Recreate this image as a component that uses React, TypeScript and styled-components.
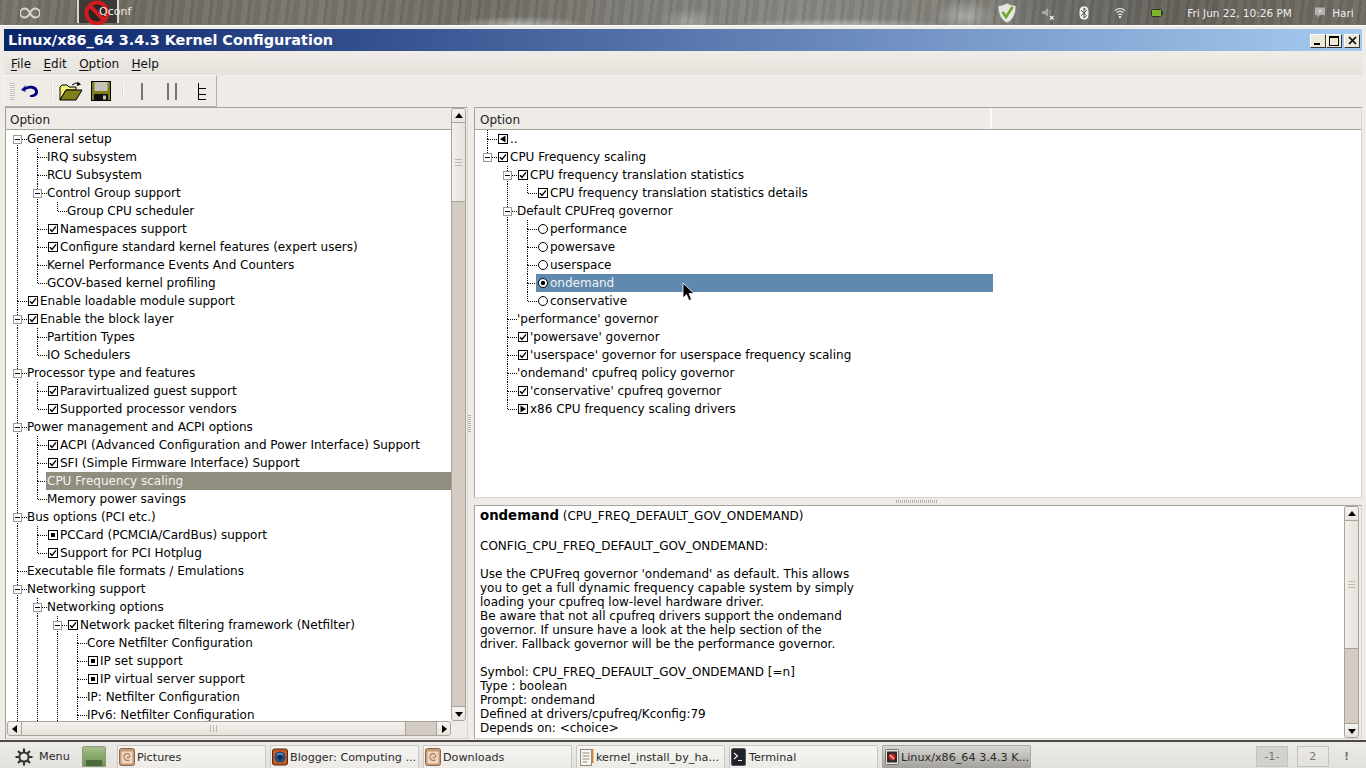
import React from 'react';
import styled, { createGlobalStyle } from 'styled-components';

const GlobalStyle = createGlobalStyle`
  html, body {
    margin: 0;
    padding: 0;
    background: #efebe6;
    overflow: hidden;
  }
  * {
    box-sizing: border-box;
  }
`;

const Desktop = styled.div`
  position: relative;
  width: 1366px;
  height: 768px;
  display: flex;
  flex-direction: column;
  overflow: hidden;
  font-family: 'DejaVu Sans', sans-serif;
  font-size: 12px;
  color: #000;
`;

/* ---------- top panel ---------- */

const TopPanel = styled.div`
  height: 25px;
  flex: none;
  display: flex;
  align-items: center;
  color: #f0eeea;
  font-size: 10.5px;
  background:
    repeating-linear-gradient(97deg, #00000010 0 3px, #ffffff08 3px 7px, #00000008 7px 13px, #ffffff0c 13px 19px),
    radial-gradient(ellipse 70px 9px at 520px 25px, #aeb0ac 0, #aeb0ac00 100%),
    radial-gradient(ellipse 110px 8px at 840px 26px, #b4b6b2 0, #b4b6b200 100%),
    radial-gradient(ellipse 30px 14px at 690px 22px, #a0a19d 0, #a0a19d00 100%),
    radial-gradient(ellipse 30px 16px at 965px 16px, #a9aba7 0, #a9aba700 100%),
    linear-gradient(90deg, #77736a 0, #6f6a60 120px, #79746a 300px, #706c63 480px, #7d7b75 620px, #86857f 800px, #7f7d76 1000px, #6c6d68 1040px, #64615a 1180px, #6f6b64 1366px);
`;

const PanelLogo = styled.div`
  width: 77px;
  flex: none;
  display: flex;
  justify-content: center;
  padding-right: 18px;
`;

const ActiveApp = styled.div`
  width: 42px;
  height: 23px;
  flex: none;
  display: flex;
  align-items: center;
  gap: 1px;
  padding-left: 9px;
  background: #3b3a38;
  border-left: 2px solid #d8d6d2;
  border-right: 2px solid #d8d6d2;
  overflow: visible;
  white-space: nowrap;
  align-self: flex-start;
`;

const AppLabel = styled.span`
  margin-left: -12px;
  color: #eeeeea;
  font-size: 11px;
`;

const PanelSpacer = styled.div`
  flex: 1;
`;

const Tray = styled.div`
  display: flex;
  align-items: center;
  padding-right: 12px;
`;

const TraySlot = styled.div<{ $w: number; $ml: number }>`
  width: ${(p) => p.$w}px;
  margin-left: ${(p) => p.$ml}px;
  flex: none;
  display: flex;
  justify-content: center;
  align-items: center;
  white-space: nowrap;
`;

/* ---------- window ---------- */

const Window = styled.div`
  height: 715px;
  flex: none;
  display: flex;
  flex-direction: column;
  padding: 4px 4px 0 4px;
  background: #efebe6;
  border-top: 1px solid #fff;
`;

const TitleBar = styled.div`
  height: 22px;
  flex: none;
  margin-top: -1px;
  padding: 0 2px 0 4px;
  display: flex;
  align-items: center;
  justify-content: space-between;
  font-size: 14.4px;
  font-weight: bold;
  color: #fff;
  background: linear-gradient(90deg, #0a246a, #a6caf0);
`;

const WinButtons = styled.div`
  display: flex;
  padding-top: 1px;
`;

const WinButton = styled.div<{ $gap?: number }>`
  width: 16px;
  height: 14px;
  margin-left: ${(p) => p.$gap ?? 0}px;
  display: flex;
  align-items: center;
  justify-content: center;
  background: #ece9d8;
  border-top: 1px solid #fff;
  border-left: 1px solid #fff;
  border-right: 1px solid #333;
  border-bottom: 1px solid #333;
`;

const MenuBar = styled.div`
  height: 24px;
  flex: none;
  display: flex;
  align-items: center;
  gap: 12.4px;
  padding: 2px 0 0 7px;
  background: linear-gradient(#f0ece7, #e5e2dc);
`;

const MenuItem = styled.span`
  color: #111;
  u {
    text-underline-offset: 2px;
  }
`;

const ToolRow = styled.div`
  height: 32px;
  flex: none;
  display: flex;
`;

const Toolbar = styled.div`
  width: 213px;
  height: 32px;
  display: flex;
  align-items: center;
  padding-left: 5px;
  border: 1px solid #b5b1a9;
  border-left-color: #f8f6f3;
  border-top-color: #f8f6f3;
  background: #efebe6;
`;

const Grip = styled.div`
  width: 5px;
  height: 17px;
  flex: none;
  background: repeating-linear-gradient(to bottom, #c4c0b8 0 1px, #f7f5f2 1px 2px);
`;

const ToolButton = styled.div<{ $w?: number }>`
  width: ${(p) => p.$w ?? 30}px;
  height: 30px;
  flex: none;
  display: flex;
  align-items: center;
  justify-content: center;
`;

const ToolSep = styled.div<{ $gap: number }>`
  width: 2px;
  height: 16px;
  flex: none;
  margin: 0 ${(p) => p.$gap}px 0 6px;
  background: #dedad4;
  border-right: 1px solid #fbfaf8;
`;

const Panes = styled.div`
  flex: 1;
  min-height: 0;
  display: flex;
  padding: 0 0 1px 1px;
`;

const LeftFrame = styled.div`
  width: 463px;
  flex: none;
  display: grid;
  grid-template-columns: 1fr 15px;
  grid-template-rows: 1fr 15px;
  padding-bottom: 2px;
  padding-right: 1px;
  border: 1px solid #a8a49c;
  border-bottom-color: #d9d5cf;
  border-right-color: #d9d5cf;
  background: #efebe6;
  overflow: hidden;
`;

const LeftMain = styled.div`
  min-height: 0;
  display: flex;
  flex-direction: column;
  background: #fff;
  overflow: hidden;
`;

const VSplit = styled.div`
  width: 6px;
  flex: none;
  display: flex;
  align-items: center;
  justify-content: center;
`;

const SplitDotsV = styled.div`
  width: 3px;
  height: 17px;
  margin-left: -4px;
  background: repeating-linear-gradient(to bottom, #b0aca4 0 1px, #f7f5f2 1px 2px);
`;

const RightColumn = styled.div`
  flex: 1;
  min-width: 0;
  display: flex;
  flex-direction: column;
`;

const TreeFrame = styled.div`
  height: 391px;
  flex: none;
  display: flex;
  flex-direction: column;
  border: 1px solid #a8a49c;
  border-bottom-color: #d9d5cf;
  border-right-color: #d9d5cf;
  background: #fff;
  overflow: hidden;
`;

const HSplit = styled.div`
  height: 7px;
  flex: none;
  display: flex;
  align-items: center;
  justify-content: center;
  padding-right: 4px;
`;

const SplitDotsH = styled.div`
  width: 41px;
  height: 3px;
  background: repeating-linear-gradient(to right, #b0aca4 0 1px, #f7f5f2 1px 2px);
`;

const DetailFrame = styled.div`
  flex: 1;
  min-height: 0;
  display: flex;
  padding-right: 2px;
  border: 1px solid #a8a49c;
  border-bottom-color: #d9d5cf;
  border-right-color: #d9d5cf;
  background: #efebe6;
  overflow: hidden;
`;

const DetailBody = styled.div`
  flex: 1;
  min-width: 0;
  padding: 2px 0 0 5px;
  background: #fff;
  line-height: 14px;
  white-space: pre-line;
  overflow: hidden;
`;

const DetailTitle = styled.div`
  height: 16px;
  line-height: 16px;
  margin-bottom: 15px;
  strong {
    font-size: 13.3px;
  }
`;

/* ---------- list view ---------- */

const Header = styled.div`
  height: 22px;
  flex: none;
  display: flex;
  background: #efebe6;
  border-bottom: 1px solid #a8a49c;
`;

const HeaderCell = styled.div<{ $w?: number; $x?: number }>`
  width: ${(p) => (p.$w ? `${p.$w}px` : 'auto')};
  flex: ${(p) => (p.$w ? 'none' : 1)};
  padding: 5px 0 0 ${(p) => p.$x ?? 5}px;
  color: #222;
  border-right: ${(p) => (p.$w ? '2px solid #fbfaf8' : 'none')};
`;

const Tree = styled.div<{ $w: number; $x: number }>`
  width: ${(p) => p.$w}px;
  padding-left: ${(p) => p.$x}px;
`;

const Row = styled.div`
  height: 18px;
  display: flex;
  line-height: 18px;
  white-space: nowrap;
`;

const dots = (dir: string) => `repeating-linear-gradient(${dir}, #000 0 1px, transparent 1px 2px)`;

const Guide = styled.div<{ $on: boolean }>`
  width: 20px;
  height: 18px;
  flex: none;
  background: ${(p) => (p.$on ? `${dots('to bottom')} 10px 0 / 1px 100% no-repeat` : 'none')};
`;

const Connector = styled.div<{ $top: boolean; $down: boolean }>`
  width: 20px;
  height: 18px;
  flex: none;
  display: flex;
  align-items: center;
  padding-left: 6px;
  background:
    ${(p) => (p.$top ? `${dots('to bottom')} 10px 0 / 1px 9px no-repeat,` : '')}
    ${(p) => (p.$down ? `${dots('to bottom')} 10px 9px / 1px 9px no-repeat,` : '')}
    ${dots('to right')} 11px 9px / 9px 1px no-repeat;
`;

const Expander = styled.div`
  width: 9px;
  height: 9px;
  display: flex;
  align-items: center;
  justify-content: center;
  background: #fff;
  border: 1px solid #999;
  &::before {
    content: '';
    width: 5px;
    height: 1px;
    background: #000;
  }
`;

const Label = styled.div<{ $selected?: string }>`
  flex: 1;
  min-width: 0;
  display: flex;
  align-items: center;
  margin-left: -1px;
  padding-left: 1px;
  background: ${(p) => p.$selected ?? 'transparent'};
  color: ${(p) => (p.$selected ? '#f2f2f2' : '#000')};
`;

const StateIcon = styled.svg`
  width: 10px;
  height: 10px;
  flex: none;
  margin: 0 2px 0 1px;
`;

/* ---------- scrollbars ---------- */

const VBar = styled.div`
  width: 15px;
  flex: none;
  display: flex;
  flex-direction: column;
  background: #d4ccc3;
  border: 1px solid #a8a49c;
  border-radius: 3px;
  overflow: hidden;
`;

const ArrowButton = styled.div<{ $h?: boolean }>`
  ${(p) => (p.$h ? 'width: 14px; border-right: 1px solid #a8a49c;' : 'height: 14px; border-bottom: 1px solid #a8a49c;')}
  flex: none;
  display: flex;
  align-items: center;
  justify-content: center;
  background: linear-gradient(#f6f4f1, #e8e5df);
`;

const ArrowButtonEnd = styled(ArrowButton)`
  ${(p) => (p.$h ? 'border-right: 0; border-left: 1px solid #a8a49c;' : 'border-bottom: 0; border-top: 1px solid #a8a49c;')}
`;

const VThumb = styled.div<{ $h: number }>`
  height: ${(p) => p.$h}px;
  flex: none;
  display: flex;
  align-items: center;
  justify-content: center;
  background: linear-gradient(90deg, #f2efeb, #e6e3dd);
  border-bottom: 1px solid #a8a49c;
`;

const VGrip = styled.div`
  width: 7px;
  height: 7px;
  background: repeating-linear-gradient(to bottom, #bdb9b1 0 1px, transparent 1px 3px);
`;

const HBar = styled.div`
  display: flex;
  height: 15px;
  margin-left: 1px;
  background: #d4ccc3;
  border: 1px solid #a8a49c;
  border-radius: 3px;
  overflow: hidden;
`;

const HThumb = styled.div`
  width: 384px;
  flex: none;
  display: flex;
  align-items: center;
  justify-content: center;
  background: linear-gradient(#f4f2ee, #e6e3dd);
  border-right: 1px solid #a8a49c;
`;

const HGrip = styled.div`
  width: 7px;
  height: 7px;
  background: repeating-linear-gradient(to right, #bdb9b1 0 1px, transparent 1px 3px);
`;

const Spring = styled.div`
  flex: 1;
`;

const Pointer = styled.svg`
  position: absolute;
  left: 682px;
  top: 282px;
  width: 13px;
  height: 20px;
`;

/* ---------- bottom panel ---------- */

const BottomPanel = styled.div`
  height: 28px;
  flex: none;
  display: flex;
  align-items: stretch;
  padding: 3px 0 0 0;
  font-size: 11.2px;
  color: #2a2a2a;
  background: linear-gradient(#ecebe7, #e3e1dc);
  border-top: 2px solid #4c4a47;
`;

const MenuButton = styled.div`
  width: 82px;
  flex: none;
  display: flex;
  align-items: center;
  gap: 6px;
  padding-left: 15px;
`;

const DesktopButton = styled.div`
  width: 24px;
  height: 21px;
  flex: none;
  margin-top: 1px;
  border: 1px solid #8e9a80;
  border-radius: 2px 2px 0 0;
  display: flex;
  align-items: flex-end;
  justify-content: center;
  background: linear-gradient(#a5bf88, #6d9250);
`;

const DesktopInner = styled.div`
  width: 16px;
  height: 6px;
  background: #4d6a3a;
`;

const TaskList = styled.div`
  display: flex;
  gap: 4px;
  margin-left: 11px;
`;

const TaskButton = styled.div<{ $active?: boolean }>`
  width: 149px;
  flex: none;
  display: flex;
  align-items: center;
  gap: 2px;
  padding-left: 1px;
  white-space: nowrap;
  overflow: hidden;
  border: 1px solid ${(p) => (p.$active ? '#a9a7a2' : '#c9c7c1')};
  border-bottom: 0;
  border-radius: 2px 2px 0 0;
  background: ${(p) => (p.$active ? 'linear-gradient(#d9d7d2, #a3a19c)' : 'linear-gradient(#f6f5f2, #ecebe7)')};
`;

const Pager = styled.div`
  display: flex;
  align-items: flex-start;
  margin-left: auto;
  padding-right: 17px;
  padding-top: 1px;
  color: #777;
`;

const Workspace = styled.div<{ $active?: boolean }>`
  width: 32px;
  height: 21px;
  margin-right: 9px;
  display: flex;
  align-items: center;
  justify-content: center;
  border: 1px solid #c5c3bd;
  background: ${(p) => (p.$active ? '#d3d1cc' : 'transparent')};
`;

const Bang = styled.div`
  height: 21px;
  margin-left: 6px;
  display: flex;
  align-items: center;
  font-weight: bold;
`;

/* ---------- data ---------- */

type State = 'check' | 'dot' | 'radio' | 'radioOn' | 'back' | 'forward';

type Item = {
  level: number;
  text: string;
  open?: boolean;
  state?: State;
  selected?: boolean;
};

const leftItems: Item[] = [
  { level: 0, text: 'General setup', open: true },
  { level: 1, text: 'IRQ subsystem' },
  { level: 1, text: 'RCU Subsystem' },
  { level: 1, text: 'Control Group support', open: true },
  { level: 2, text: 'Group CPU scheduler' },
  { level: 1, text: 'Namespaces support', state: 'check' },
  { level: 1, text: 'Configure standard kernel features (expert users)', state: 'check' },
  { level: 1, text: 'Kernel Performance Events And Counters' },
  { level: 1, text: 'GCOV-based kernel profiling' },
  { level: 0, text: 'Enable loadable module support', state: 'check' },
  { level: 0, text: 'Enable the block layer', state: 'check', open: true },
  { level: 1, text: 'Partition Types' },
  { level: 1, text: 'IO Schedulers' },
  { level: 0, text: 'Processor type and features', open: true },
  { level: 1, text: 'Paravirtualized guest support', state: 'check' },
  { level: 1, text: 'Supported processor vendors', state: 'check' },
  { level: 0, text: 'Power management and ACPI options', open: true },
  { level: 1, text: 'ACPI (Advanced Configuration and Power Interface) Support', state: 'check' },
  { level: 1, text: 'SFI (Simple Firmware Interface) Support', state: 'check' },
  { level: 1, text: 'CPU Frequency scaling', selected: true },
  { level: 1, text: 'Memory power savings' },
  { level: 0, text: 'Bus options (PCI etc.)', open: true },
  { level: 1, text: 'PCCard (PCMCIA/CardBus) support', state: 'dot' },
  { level: 1, text: 'Support for PCI Hotplug', state: 'check' },
  { level: 0, text: 'Executable file formats / Emulations' },
  { level: 0, text: 'Networking support', open: true },
  { level: 1, text: 'Networking options', open: true },
  { level: 2, text: 'Network packet filtering framework (Netfilter)', state: 'check', open: true },
  { level: 3, text: 'Core Netfilter Configuration' },
  { level: 3, text: 'IP set support', state: 'dot' },
  { level: 3, text: 'IP virtual server support', state: 'dot' },
  { level: 3, text: 'IP: Netfilter Configuration' },
  { level: 3, text: 'IPv6: Netfilter Configuration' },
];

const rightItems: Item[] = [
  { level: 0, text: '..', state: 'back' },
  { level: 0, text: 'CPU Frequency scaling', state: 'check', open: true },
  { level: 1, text: 'CPU frequency translation statistics', state: 'check', open: true },
  { level: 2, text: 'CPU frequency translation statistics details', state: 'check' },
  { level: 1, text: 'Default CPUFreq governor', open: true },
  { level: 2, text: 'performance', state: 'radio' },
  { level: 2, text: 'powersave', state: 'radio' },
  { level: 2, text: 'userspace', state: 'radio' },
  { level: 2, text: 'ondemand', state: 'radioOn', selected: true },
  { level: 2, text: 'conservative', state: 'radio' },
  { level: 1, text: "'performance' governor" },
  { level: 1, text: "'powersave' governor", state: 'check' },
  { level: 1, text: "'userspace' governor for userspace frequency scaling", state: 'check' },
  { level: 1, text: "'ondemand' cpufreq policy governor" },
  { level: 1, text: "'conservative' cpufreq governor", state: 'check' },
  { level: 1, text: 'x86 CPU frequency scaling drivers', state: 'forward' },
];

const helpText = `CONFIG_CPU_FREQ_DEFAULT_GOV_ONDEMAND:

Use the CPUFreq governor 'ondemand' as default. This allows
you to get a full dynamic frequency capable system by simply
loading your cpufreq low-level hardware driver.
Be aware that not all cpufreq drivers support the ondemand
governor. If unsure have a look at the help section of the
driver. Fallback governor will be the performance governor.

Symbol: CPU_FREQ_DEFAULT_GOV_ONDEMAND [=n]
Type : boolean
Prompt: ondemand
Defined at drivers/cpufreq/Kconfig:79
Depends on: <choice>`;

// a level keeps its dotted line while another sibling is still to come
const hasNextSibling = (items: Item[], index: number, level: number, openEnded: boolean) => {
  for (let i = index + 1; i < items.length; i++) {
    if (items[i].level < level) return false;
    if (items[i].level === level) return true;
  }
  return openEnded;
};

/* ---------- icons ---------- */

const StateGlyph = ({ state }: { state: State }) => (
  <StateIcon viewBox="0 0 10 10">
    {state === 'radio' || state === 'radioOn' ? (
      <>
        <circle cx="5" cy="5" r="4.5" fill="#fff" stroke="#000" />
        {state === 'radioOn' && <circle cx="5" cy="5" r="2.2" fill="#000" />}
      </>
    ) : (
      <>
        <rect x="0.5" y="0.5" width="9" height="9" fill="#fff" stroke="#000" />
        {state === 'check' && <path d="M2 5.2 L4 7.4 L8 2.4" fill="none" stroke="#000" strokeWidth="1.4" />}
        {state === 'dot' && <rect x="3" y="3" width="4" height="4" fill="#000" />}
        {state === 'back' && <path d="M7.5 1.5 V8.5 L2 5 Z" fill="#000" />}
        {state === 'forward' && <path d="M2.5 1.5 V8.5 L8 5 Z" fill="#000" />}
      </>
    )}
  </StateIcon>
);

const TreeList = ({ items, width, inset, selectColor, openEnded }: { items: Item[]; width: number; inset: number; selectColor: string; openEnded: boolean }) => (
  <Tree $w={width} $x={inset}>
    {items.map((item, i) => (
      <Row key={item.text + i}>
        {Array.from({ length: item.level }, (_, l) => (
          <Guide key={l} $on={hasNextSibling(items, i, l, openEnded)} />
        ))}
        <Connector $top={!(i === 0 && item.open)} $down={hasNextSibling(items, i, item.level, openEnded)}>
          {item.open && <Expander />}
        </Connector>
        <Label $selected={item.selected ? selectColor : undefined}>
          {item.state && <StateGlyph state={item.state} />}
          {item.text}
        </Label>
      </Row>
    ))}
  </Tree>
);

const Arrow = ({ dir }: { dir: 'up' | 'down' | 'left' | 'right' }) => {
  const d = { up: 'M0 6 H8 L4 1 Z', down: 'M0 2 H8 L4 7 Z', left: 'M6 0 V8 L1 4 Z', right: 'M2 0 V8 L7 4 Z' }[dir];
  return (
    <svg width="8" height="8" viewBox="0 0 8 8">
      <path d={d} fill="#000" />
    </svg>
  );
};

const DebianFolder = () => (
  <svg width="16" height="18" viewBox="0 0 16 18">
    <rect x="0.5" y="0.5" width="15" height="17" rx="2" fill="#c99a72" stroke="#8d6a4d" />
    <rect x="2.5" y="3.5" width="11" height="12" rx="1" fill="#ecd9c6" />
    <path d="M10.5 12 C7 13.5 4.5 11 5 8 C5.5 5.5 9 4.5 10.5 7 C11.5 9 9 10.5 7.8 9" fill="none" stroke="#b5764a" strokeWidth="1.2" />
  </svg>
);

const BloggerIcon = () => (
  <svg width="16" height="18" viewBox="0 0 16 18">
    <rect x="0.5" y="1" width="15" height="16" rx="2" fill="#c9561b" stroke="#4a2a14" />
    <circle cx="8" cy="9" r="5.5" fill="#1d4f8a" />
    <circle cx="8" cy="9" r="2.5" fill="#0e2a4c" />
    <path d="M5 7 Q8 4 11 7" fill="none" stroke="#8fb8de" strokeWidth="1" />
  </svg>
);

const NoteIcon = () => (
  <svg width="14" height="18" viewBox="0 0 14 18" style={{ marginLeft: 2 }}>
    <rect x="0.5" y="1.5" width="11" height="16" fill="#f8f6ef" stroke="#8a8a84" />
    <path d="M2.5 5 H9.5 M2.5 8 H9.5 M2.5 11 H9.5 M2.5 14 H7" stroke="#8f8f88" />
    <path d="M12.5 1 V15" stroke="#d08a3c" strokeWidth="2" />
  </svg>
);

const TerminalIcon = () => (
  <svg width="16" height="18" viewBox="0 0 16 18">
    <rect x="0.5" y="0.5" width="14" height="17" rx="1.5" fill="#20242a" stroke="#55595e" />
    <path d="M3 5 L6.5 8 L3 11" fill="none" stroke="#eee" strokeWidth="1.2" />
    <path d="M7 12.5 H11" stroke="#eee" strokeWidth="1.2" />
  </svg>
);

const QconfIcon = () => (
  <svg width="14" height="18" viewBox="0 0 14 18" style={{ marginLeft: 1 }}>
    <rect x="0.5" y="1.5" width="13" height="15" rx="1" fill="#e8e6e2" stroke="#77756f" />
    <rect x="2" y="3.5" width="10" height="11" fill="#2a2a2a" />
    <circle cx="7" cy="9" r="3.4" fill="#d11f1f" />
    <path d="M4.8 6.8 L9.2 11.2" stroke="#f3e4e4" strokeWidth="1.1" />
  </svg>
);

const NoEntry = () => (
  <svg width="26" height="26" viewBox="0 0 26 26" style={{ marginLeft: -4, marginTop: 3, flex: 'none' }}>
    <circle cx="13" cy="13" r="10.5" fill="#2a2624" stroke="#cf1d1d" strokeWidth="4" />
    <path d="M6 6 L20 20" stroke="#cf1d1d" strokeWidth="4" />
  </svg>
);

const Gear = () => (
  <svg width="18" height="18" viewBox="0 0 18 18">
    <circle cx="9" cy="9" r="4.6" fill="none" stroke="#333" strokeWidth="2" />
    <path d="M9 0.5 V4 M9 14 V17.5 M0.5 9 H4 M14 9 H17.5 M3 3 L5.4 5.4 M12.6 12.6 L15 15 M3 15 L5.4 12.6 M12.6 5.4 L15 3" stroke="#333" strokeWidth="2.2" />
  </svg>
);

export default function App() {
  return (
    <Desktop>
      <GlobalStyle />
      <TopPanel>
        <PanelLogo>
          <svg width="20" height="12" viewBox="0 0 20 12">
            <path d="M10 6 C8 2 6 1.5 4.6 1.5 A4.5 4.5 0 0 0 4.6 10.5 C6 10.5 8 10 10 6 C12 2 14 1.5 15.4 1.5 A4.5 4.5 0 0 1 15.4 10.5 C14 10.5 12 10 10 6 Z" fill="none" stroke="#d9d8d4" strokeWidth="1.8" />
          </svg>
        </PanelLogo>
        <ActiveApp>
          <NoEntry />
          <AppLabel>Qconf</AppLabel>
        </ActiveApp>
        <PanelSpacer />
        <Tray>
          <TraySlot $w={20} $ml={0}>
            <svg width="20" height="22" viewBox="0 0 20 22">
              <path d="M10 1 C13 3 16 3.5 19 3.5 C19 12 16 18 10 21 C4 18 1 12 1 3.5 C4 3.5 7 3 10 1 Z" fill="#e4e6e0" stroke="#8d9087" />
              <path d="M5.5 10 L9 15 L15.5 5" fill="none" stroke="#6fa52c" strokeWidth="2.6" />
            </svg>
          </TraySlot>
          <TraySlot $w={20} $ml={21}>
            <svg width="14" height="14" viewBox="0 0 14 14">
              <path d="M1 5 H3.5 L7 2 V10.5 L3.5 8 H1 Z" fill="#a9a8a3" />
              <path d="M8.5 4 Q10 6 8.5 8.5" fill="none" stroke="#a9a8a3" />
              <path d="M9 10 L12.5 13.5 M12.5 10 L9 13.5" stroke="#f2f1ed" strokeWidth="1.3" />
            </svg>
          </TraySlot>
          <TraySlot $w={20} $ml={16}>
            <svg width="10" height="14" viewBox="0 0 10 14">
              <path d="M5 0.5 C8.5 0.5 9.5 2 9.5 7 C9.5 12 8.5 13.5 5 13.5 C1.5 13.5 0.5 12 0.5 7 C0.5 2 1.5 0.5 5 0.5 Z" fill="#efeeea" />
              <path d="M2 4.2 L7.5 9.5 L5 12 V2 L7.5 4.5 L2 9.8" fill="none" stroke="#55534e" />
            </svg>
          </TraySlot>
          <TraySlot $w={20} $ml={16}>
            <svg width="12" height="12" viewBox="0 0 12 12">
              <path d="M0.8 3.6 Q6 -0.6 11.2 3.6 M2.4 5.6 Q6 2.6 9.6 5.6 M4 7.6 Q6 6 8 7.6" fill="none" stroke="#efeeea" strokeWidth="1.2" />
              <circle cx="6" cy="10" r="1.2" fill="#efeeea" />
            </svg>
          </TraySlot>
          <TraySlot $w={20} $ml={17}>
            <svg width="12" height="8" viewBox="0 0 12 8">
              <rect x="0.5" y="0.5" width="10" height="7" rx="1" fill="#7fb52a" stroke="#2b3320" />
              <rect x="11" y="2.5" width="1" height="3" fill="#2b3320" />
            </svg>
          </TraySlot>
          <TraySlot $w={105} $ml={20}>Fri Jun 22, 10:26 PM</TraySlot>
          <TraySlot $w={20} $ml={18}>
            <svg width="12" height="11" viewBox="0 0 12 11">
              <path d="M1 0.5 H11 V8 H6 L3.5 10.5 V8 H1 Z" fill="#b2b1ac" />
              <path d="M4.5 2.5 L7.5 5.5 M7.5 2.5 L4.5 5.5" stroke="#e4e3df" />
            </svg>
          </TraySlot>
          <TraySlot $w={22} $ml={2}>Hari</TraySlot>
        </Tray>
      </TopPanel>

      <Window>
        <TitleBar>
          Linux/x86_64 3.4.3 Kernel Configuration
          <WinButtons>
            <WinButton>
              <svg width="8" height="8" viewBox="0 0 8 8"><rect x="0" y="6" width="6" height="2" fill="#000" /></svg>
            </WinButton>
            <WinButton $gap={0}>
              <svg width="10" height="10" viewBox="0 0 10 10"><rect x="0.5" y="1" width="9" height="8.5" fill="none" stroke="#000" /><rect x="0" y="0" width="10" height="2" fill="#000" /></svg>
            </WinButton>
            <WinButton $gap={2}>
              <svg width="9" height="9" viewBox="0 0 9 9"><path d="M1 1 L8 8 M8 1 L1 8" stroke="#000" strokeWidth="1.6" /></svg>
            </WinButton>
          </WinButtons>
        </TitleBar>

        <MenuBar>
          <MenuItem><u>F</u>ile</MenuItem>
          <MenuItem><u>E</u>dit</MenuItem>
          <MenuItem><u>O</u>ption</MenuItem>
          <MenuItem><u>H</u>elp</MenuItem>
        </MenuBar>

        <ToolRow>
          <Toolbar>
            <Grip />
            <ToolButton>
              <svg width="20" height="14" viewBox="0 0 20 14">
                <path d="M6 1 L1 6 L6 8 L5 6.5 C8 3.6 14 3.6 15 7 C15.6 9.4 13 11 10 11 V13 C14.5 13.5 18.6 11.6 18 7 C17 1.4 9.5 0.4 5.2 3.4 Z" fill="#00007f" />
              </svg>
            </ToolButton>
            <ToolSep $gap={3} />
            <ToolButton>
              <svg width="24" height="20" viewBox="0 0 24 20">
                <path d="M1 19 V6 L3 4 H8 L10 6 H17 V9 H7 L1 19" fill="#f4f07a" stroke="#000" />
                <path d="M1 19 L7 9 H23 L17 19 Z" fill="#807f18" stroke="#000" />
                <path d="M13 4 Q17 0.5 20 3" fill="none" stroke="#000" />
                <path d="M18.5 0.5 L22 3.5 L18 5 Z" fill="#000" />
              </svg>
            </ToolButton>
            <ToolButton>
              <svg width="20" height="20" viewBox="0 0 20 20">
                <rect x="0.5" y="0.5" width="19" height="19" fill="#807f18" stroke="#000" />
                <rect x="3.5" y="1" width="13" height="9" fill="#c4c2bb" />
                <rect x="3" y="13" width="14" height="6.5" fill="#111" />
                <rect x="12" y="14.5" width="3" height="4" fill="#c4c2bb" />
              </svg>
            </ToolButton>
            <ToolSep $gap={3} />
            <ToolButton>
              <svg width="2" height="17" viewBox="0 0 2 17"><path d="M1 0 V17" stroke="#000" /></svg>
            </ToolButton>
            <ToolButton>
              <svg width="10" height="17" viewBox="0 0 10 17"><path d="M1 0 V17 M9 0 V17" stroke="#000" /></svg>
            </ToolButton>
            <ToolButton>
              <svg width="8" height="17" viewBox="0 0 8 17"><path d="M0.5 0 V17 M0.5 5.5 H8 M0.5 11.5 H8 M0.5 16.5 H8" stroke="#000" /></svg>
            </ToolButton>
          </Toolbar>
        </ToolRow>

        <Panes>
          <LeftFrame>
            <LeftMain>
              <Header>
                <HeaderCell $x={4}>Option</HeaderCell>
              </Header>
              <TreeList items={leftItems} width={445} inset={1} selectColor="#928e7f" openEnded />
            </LeftMain>
            <VBar>
              <ArrowButton><Arrow dir="up" /></ArrowButton>
              <VThumb $h={79}><VGrip /></VThumb>
              <Spring />
              <ArrowButtonEnd><Arrow dir="down" /></ArrowButtonEnd>
            </VBar>
            <HBar>
              <ArrowButton $h><Arrow dir="left" /></ArrowButton>
              <HThumb><HGrip /></HThumb>
              <Spring />
              <ArrowButtonEnd $h><Arrow dir="right" /></ArrowButtonEnd>
            </HBar>
          </LeftFrame>

          <VSplit><SplitDotsV /></VSplit>

          <RightColumn>
            <TreeFrame>
              <Header>
                <HeaderCell $w={517}>Option</HeaderCell>
                <HeaderCell />
              </Header>
              <TreeList items={rightItems} width={518} inset={2} selectColor="#6089b0" openEnded={false} />
            </TreeFrame>
            <HSplit><SplitDotsH /></HSplit>
            <DetailFrame>
              <DetailBody>
                <DetailTitle><strong>ondemand</strong> (CPU_FREQ_DEFAULT_GOV_ONDEMAND)</DetailTitle>
                {helpText}
              </DetailBody>
              <VBar>
                <ArrowButton><Arrow dir="up" /></ArrowButton>
                <VThumb $h={128}><VGrip /></VThumb>
                <Spring />
                <ArrowButtonEnd><Arrow dir="down" /></ArrowButtonEnd>
              </VBar>
            </DetailFrame>
          </RightColumn>
        </Panes>
      </Window>

      <BottomPanel>
        <MenuButton>
          <Gear />
          Menu
        </MenuButton>
        <DesktopButton><DesktopInner /></DesktopButton>
        <TaskList>
          <TaskButton><DebianFolder />Pictures</TaskButton>
          <TaskButton><BloggerIcon />Blogger: Computing ...</TaskButton>
          <TaskButton><DebianFolder />Downloads</TaskButton>
          <TaskButton><NoteIcon />kernel_install_by_ha...</TaskButton>
          <TaskButton><TerminalIcon />Terminal</TaskButton>
          <TaskButton $active><QconfIcon />Linux/x86_64 3.4.3 K...</TaskButton>
        </TaskList>
        <Pager>
          <Workspace $active>-1-</Workspace>
          <Workspace>2</Workspace>
          <Bang>!</Bang>
        </Pager>
      </BottomPanel>

      <Pointer viewBox="0 0 13 20">
        <path d="M1 1 V16 L4.5 12.5 L7 18.5 L9.5 17.5 L7 11.5 H12 Z" fill="#000" stroke="#fff" strokeWidth="0.8" />
      </Pointer>
    </Desktop>
  );
}
